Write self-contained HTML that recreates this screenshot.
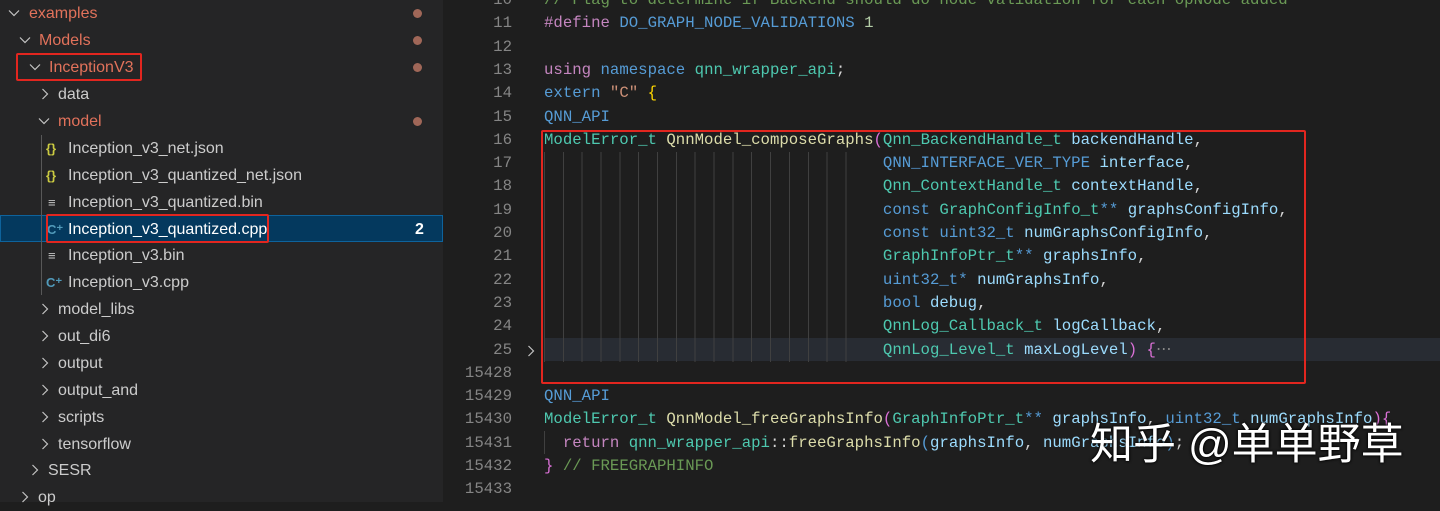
<!DOCTYPE html>
<html><head><meta charset="utf-8">
<style>
*{margin:0;padding:0;box-sizing:border-box}
body{width:1440px;height:502px;overflow:hidden;background:#1e1e1e;position:relative;font-family:"Liberation Sans","Noto Sans CJK SC",sans-serif}
#side{position:absolute;left:0;top:0;width:443px;height:502px;background:#252526}
.r{position:absolute;left:0;width:443px;height:27px;line-height:27px;font-size:16px;color:#cccccc;white-space:nowrap}
.r svg{position:absolute;top:7px;width:12px;height:12px}
.r .t{position:absolute;top:0}
.mod{color:#e2725b}
.dot{position:absolute;left:413px;top:9px;width:9px;height:9px;border-radius:50%;background:#a06758}
.ic{position:absolute;top:0;font-size:13px;font-weight:bold}
#ed{position:absolute;left:443px;top:0;width:997px;height:502px;background:#1e1e1e;font-family:"Liberation Mono",monospace;font-size:15.7px}
.l{position:absolute;left:0;width:997px;height:23.3px;line-height:23.3px;white-space:pre}
.n{position:absolute;right:928px;color:#858585;text-align:right}
.cd{position:absolute;left:101px;color:#d4d4d4}
.k{color:#569cd6}.p{color:#c586c0}.ty{color:#4ec9b0}.f{color:#dcdcaa}.v{color:#9cdcfe}.s{color:#ce9178}.nu{color:#b5cea8}.cm{color:#6a9955}.y{color:#ffd700}.o{color:#da70d6}
.box{position:absolute;border:2px solid #e2261f;border-radius:2px}
.g{position:absolute;width:1px;background:#404040}
</style></head><body>
<svg width="0" height="0" style="position:absolute"><defs>
<symbol id="dn" viewBox="0 0 12 12"><path d="M1 3.5 L6 8.5 L11 3.5" fill="none" stroke="#c5c5c5" stroke-width="1.2"/></symbol>
<symbol id="rt" viewBox="0 0 12 12"><path d="M3.5 1 L8.5 6 L3.5 11" fill="none" stroke="#c5c5c5" stroke-width="1.2"/></symbol>
</defs></svg>
<div id="side">
 <div class="r" style="top:0"><svg style="left:8px"><use href="#dn"/></svg><span class="t mod" style="left:29px">examples</span><span class="dot"></span></div>
 <div class="r" style="top:27px"><svg style="left:19px"><use href="#dn"/></svg><span class="t mod" style="left:39px">Models</span><span class="dot"></span></div>
 <div class="r" style="top:54px"><svg style="left:29px"><use href="#dn"/></svg><span class="t mod" style="left:49px">InceptionV3</span><span class="dot"></span></div>
 <div class="r" style="top:81px"><svg style="left:39px"><use href="#rt"/></svg><span class="t" style="left:58px">data</span></div>
 <div class="r" style="top:108px"><svg style="left:38px"><use href="#dn"/></svg><span class="t mod" style="left:58px">model</span><span class="dot"></span></div>
 <div class="r" style="top:135px"><span class="ic" style="left:46px;color:#cbcb41">{}</span><span class="t" style="left:68px">Inception_v3_net.json</span></div>
 <div class="r" style="top:162px"><span class="ic" style="left:46px;color:#cbcb41">{}</span><span class="t" style="left:68px">Inception_v3_quantized_net.json</span></div>
 <div class="r" style="top:189px"><span class="ic" style="left:48px;color:#c5c5c5">&#8801;</span><span class="t" style="left:68px">Inception_v3_quantized.bin</span></div>
 <div class="r" style="top:215px;height:27px;background:#04395e;border:1px solid #0e639c;color:#fff"><span class="ic" style="left:46px;color:#519aba">C&#8314;</span><span class="t" style="left:67px">Inception_v3_quantized.cpp</span><span class="t" style="left:414px;font-weight:bold">2</span></div>
 <div class="r" style="top:242px"><span class="ic" style="left:48px;color:#c5c5c5">&#8801;</span><span class="t" style="left:68px">Inception_v3.bin</span></div>
 <div class="r" style="top:269px"><span class="ic" style="left:46px;color:#519aba">C&#8314;</span><span class="t" style="left:68px">Inception_v3.cpp</span></div>
 <div class="r" style="top:296px"><svg style="left:39px"><use href="#rt"/></svg><span class="t" style="left:58px">model_libs</span></div>
 <div class="r" style="top:323px"><svg style="left:39px"><use href="#rt"/></svg><span class="t" style="left:58px">out_di6</span></div>
 <div class="r" style="top:350px"><svg style="left:39px"><use href="#rt"/></svg><span class="t" style="left:58px">output</span></div>
 <div class="r" style="top:377px"><svg style="left:39px"><use href="#rt"/></svg><span class="t" style="left:58px">output_and</span></div>
 <div class="r" style="top:404px"><svg style="left:39px"><use href="#rt"/></svg><span class="t" style="left:58px">scripts</span></div>
 <div class="r" style="top:431px"><svg style="left:39px"><use href="#rt"/></svg><span class="t" style="left:58px">tensorflow</span></div>
 <div class="r" style="top:457px"><svg style="left:29px"><use href="#rt"/></svg><span class="t" style="left:48px">SESR</span></div>
 <div class="r" style="top:484px"><svg style="left:19px"><use href="#rt"/></svg><span class="t" style="left:38px">op</span></div>
 <div style="position:absolute;left:41px;top:135px;width:1px;height:160px;background:#585858"></div>
 <div class="box" style="left:16px;top:53px;width:126px;height:28px"></div>
 <div class="box" style="left:46px;top:214px;width:223px;height:29px"></div>
</div>
<div id="ed">
 <div style="position:absolute;left:101px;top:338px;width:896px;height:23.3px;background:#282c33"></div>
 <div class="l" style="top:-11px"><span class="n">10</span><span class="cd cm">// Flag to determine if Backend should do node validation for each opNode added</span></div>
 <div class="l" style="top:12.3px"><span class="n">11</span><span class="cd"><span class="p">#define</span> <span class="k">DO_GRAPH_NODE_VALIDATIONS</span> <span class="nu">1</span></span></div>
 <div class="l" style="top:35.6px"><span class="n">12</span></div>
 <div class="l" style="top:58.9px"><span class="n">13</span><span class="cd"><span class="p">using</span> <span class="k">namespace</span> <span class="ty">qnn_wrapper_api</span>;</span></div>
 <div class="l" style="top:82.2px"><span class="n">14</span><span class="cd"><span class="k">extern</span> <span class="s">"C"</span> <span class="y">{</span></span></div>
 <div class="l" style="top:105.5px"><span class="n">15</span><span class="cd k">QNN_API</span></div>
 <div class="l" style="top:128.8px"><span class="n">16</span><span class="cd"><span class="ty">ModelError_t</span> <span class="f">QnnModel_composeGraphs</span><span class="o">(</span><span class="ty">Qnn_BackendHandle_t</span> <span class="v">backendHandle</span>,</span></div>
 <div class="l" style="top:152.1px"><span class="n">17</span><span class="cd">                                    <span class="k">QNN_INTERFACE_VER_TYPE</span> <span class="v">interface</span>,</span></div>
 <div class="l" style="top:175.4px"><span class="n">18</span><span class="cd">                                    <span class="ty">Qnn_ContextHandle_t</span> <span class="v">contextHandle</span>,</span></div>
 <div class="l" style="top:198.7px"><span class="n">19</span><span class="cd">                                    <span class="k">const</span> <span class="ty">GraphConfigInfo_t</span><span class="k">**</span> <span class="v">graphsConfigInfo</span>,</span></div>
 <div class="l" style="top:222px"><span class="n">20</span><span class="cd">                                    <span class="k">const</span> <span class="k">uint32_t</span> <span class="v">numGraphsConfigInfo</span>,</span></div>
 <div class="l" style="top:245.3px"><span class="n">21</span><span class="cd">                                    <span class="ty">GraphInfoPtr_t</span><span class="k">**</span> <span class="v">graphsInfo</span>,</span></div>
 <div class="l" style="top:268.6px"><span class="n">22</span><span class="cd">                                    <span class="k">uint32_t*</span> <span class="v">numGraphsInfo</span>,</span></div>
 <div class="l" style="top:291.9px"><span class="n">23</span><span class="cd">                                    <span class="k">bool</span> <span class="v">debug</span>,</span></div>
 <div class="l" style="top:315.2px"><span class="n">24</span><span class="cd">                                    <span class="ty">QnnLog_Callback_t</span> <span class="v">logCallback</span>,</span></div>
 <div class="l" style="top:338.5px"><span class="n">25</span><svg style="position:absolute;left:82px;top:6px;width:12px;height:12px"><use href="#rt"/></svg><span class="cd">                                    <span class="ty">QnnLog_Level_t</span> <span class="v">maxLogLevel</span><span class="o">)</span> <span class="o">{</span><span style="color:#888">&#8943;</span></span></div>
 <div class="l" style="top:361.8px"><span class="n">15428</span></div>
 <div class="l" style="top:385.1px"><span class="n">15429</span><span class="cd k">QNN_API</span></div>
 <div class="l" style="top:408.4px"><span class="n">15430</span><span class="cd"><span class="ty">ModelError_t</span> <span class="f">QnnModel_freeGraphsInfo</span><span class="o">(</span><span class="ty">GraphInfoPtr_t</span><span class="k">**</span> <span class="v">graphsInfo</span>, <span class="k">uint32_t</span> <span class="v">numGraphsInfo</span><span class="o">){</span></span></div>
 <div class="l" style="top:431.7px"><span class="n">15431</span><span class="cd">  <span class="p">return</span> <span class="ty">qnn_wrapper_api</span>::<span class="f">freeGraphsInfo</span><span class="k">(</span><span class="v">graphsInfo</span>, <span class="v">numGraphsInfo</span><span class="k">)</span>;</span></div>
 <div class="l" style="top:455px"><span class="n">15432</span><span class="cd"><span class="o">}</span> <span class="cm">// FREEGRAPHINFO</span></span></div>
 <div class="l" style="top:478.3px"><span class="n">15433</span></div>
 <div class="g" style="left:101px;top:152px;height:210px;background:repeating-linear-gradient(90deg,#404040 0 1px,transparent 1px 18.84px);width:320px"></div>
 <div class="g" style="left:101px;top:431px;height:23px"></div>
 <div class="box" style="left:98px;top:130px;width:765px;height:254px"></div>
 <div style="position:absolute;left:647px;top:410px;font-family:'Liberation Sans','Noto Sans CJK SC',sans-serif;font-size:43px;color:#fff;white-space:nowrap;text-shadow:0 0 3px #000,0 0 2px #000">知乎 @单单野草</div>
</div>
</body></html>
